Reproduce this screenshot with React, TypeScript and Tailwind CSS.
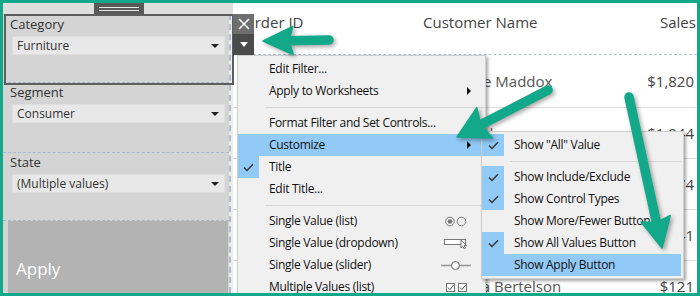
import React from "react";

const HL = "bg-[#91c9f7]";

function Check() {
  return (
    <svg width="11" height="9" viewBox="0 0 11 9">
      <polyline points="1,4.5 4,7.5 10,1.2" fill="none" stroke="#333" strokeWidth="1.4" />
    </svg>
  );
}

function RightTri() {
  return <div className="w-0 h-0 border-t-[4px] border-b-[4px] border-l-[4px] border-t-transparent border-b-transparent border-l-[#111]" />;
}

function Caret() {
  return <div className="w-0 h-0 border-l-[4px] border-r-[4px] border-t-[4px] border-l-transparent border-r-transparent border-t-[#222]" />;
}

function RadioIcon() {
  return (
    <svg width="22" height="11" viewBox="0 0 22 11">
      <circle cx="5" cy="5.5" r="4.3" fill="none" stroke="#777" strokeWidth="1" />
      <circle cx="5" cy="5.5" r="2.3" fill="#777" />
      <circle cx="16.5" cy="5.5" r="4.3" fill="none" stroke="#777" strokeWidth="1" />
    </svg>
  );
}

function DropIcon() {
  return (
    <svg width="25" height="12" viewBox="0 0 25 12">
      <rect x="0.5" y="2.5" width="21" height="5" fill="#fff" stroke="#777" strokeWidth="1" />
      <path d="M17 3 L17 11 L18.8 9.3 L20.3 11.8 L21.5 11.2 L20.1 8.6 L22.5 8.4 Z" fill="#fff" stroke="#666" strokeWidth="0.9" />
    </svg>
  );
}

function SliderIcon() {
  return (
    <svg width="30" height="11" viewBox="0 0 30 11">
      <line x1="0" y1="5.5" x2="30" y2="5.5" stroke="#999" strokeWidth="1.6" />
      <circle cx="14.5" cy="5.5" r="4" fill="#fff" stroke="#666" strokeWidth="1" />
    </svg>
  );
}

function ChecksIcon() {
  const box = (x: number) => (
    <g key={x}>
      <rect x={x + 0.5} y="1.5" width="8" height="8" fill="#fff" stroke="#777" strokeWidth="1" />
      <polyline points={`${x + 2},5.5 ${x + 4},7.5 ${x + 7.5},3`} fill="none" stroke="#555" strokeWidth="1" />
    </g>
  );
  return (
    <svg width="21" height="11" viewBox="0 0 21 11">
      {box(0)}
      {box(12)}
    </svg>
  );
}

type ItemProps = {
  label: string;
  checked?: boolean;
  highlight?: boolean;
  arrow?: boolean;
  icon?: React.ReactNode;
};

function MenuItem({ label, checked, highlight, arrow, icon }: ItemProps) {
  return (
    <div className={`flex h-[22px] items-center ${highlight ? HL : ""}`}>
      <div className={`w-[21px] h-full flex items-center justify-center ${checked ? HL : ""}`}>{checked && <Check />}</div>
      <div className="ml-[10px] flex-1 whitespace-nowrap">{label}</div>
      {arrow && (
        <div className="mr-[14px]">
          <RightTri />
        </div>
      )}
      {icon && <div className="mr-[14px] w-[30px] flex justify-center">{icon}</div>}
    </div>
  );
}

function SubItem({ label, checked, highlight }: ItemProps) {
  return (
    <div className={`flex h-[22px] items-center ${highlight ? HL : ""}`}>
      <div className={`w-[22px] h-full flex items-center justify-center ${checked ? HL : ""}`}>{checked && <Check />}</div>
      <div className="ml-[10px] flex-1 whitespace-nowrap">{label}</div>
    </div>
  );
}

function Sep({ indent }: { indent: string }) {
  return (
    <div className="h-[10px] flex items-center">
      <div className={`${indent} flex-1 h-px bg-[#d5d5d5]`} />
    </div>
  );
}

function Dropdown({ value }: { value: string }) {
  return (
    <div className="ml-[9px] mr-[4px] h-[19px] bg-[#e8e8e8] border border-[#dedede] flex items-center justify-between pl-[4px] pr-[5px] text-[12px] text-[#333] leading-none">
      <span>{value}</span>
      <Caret />
    </div>
  );
}

function FilterSection({ label, value, h }: { label: string; value: string; h: string }) {
  return (
    <div className={`${h} border-t border-dashed border-[#a9b7c9] pt-[1px]`}>
      <div className="pl-[7px] text-[13px] leading-[16px] text-[#333]">{label}</div>
      <div className="mt-[4px]">
        <Dropdown value={value} />
      </div>
    </div>
  );
}

function arrowParts(tail: [number, number], tip: [number, number], headLen: number, headHalf: number) {
  const dx = tip[0] - tail[0];
  const dy = tip[1] - tail[1];
  const L = Math.hypot(dx, dy);
  const ux = dx / L;
  const uy = dy / L;
  const px = -uy;
  const py = ux;
  const bx = tip[0] - ux * headLen;
  const by = tip[1] - uy * headLen;
  const head = `${tip[0]},${tip[1]} ${bx + px * headHalf},${by + py * headHalf} ${bx + ux * 4},${by + uy * 4} ${bx - px * headHalf},${by - py * headHalf}`;
  return { x1: tail[0], y1: tail[1], x2: bx + ux * 6, y2: by + uy * 6, head };
}

function Arrow({ tail, tip, len, half }: { tail: [number, number]; tip: [number, number]; len: number; half: number }) {
  const a = arrowParts(tail, tip, len, half);
  return (
    <g>
      <line x1={a.x1} y1={a.y1} x2={a.x2} y2={a.y2} stroke="#12a88a" strokeWidth="9.5" strokeLinecap="round" />
      <polygon points={a.head} fill="#12a88a" stroke="#12a88a" strokeWidth="1.5" strokeLinejoin="round" />
    </g>
  );
}

const rows = [
  { name: "Josephine Maddox", sales: "$1,820", h: "h-[53px]" },
  { name: "Rick Bensley", sales: "$1,044", h: "h-[51px]" },
  { name: "Joel Eaton", sales: "$2,574", h: "h-[51px]" },
  { name: "Dan Reichenbach", sales: "$1,041", h: "h-[51px]" },
  { name: "Anastasia Bertelson", sales: "$121", h: "h-[51px]" },
];

export default function App() {
  return (
    <div className="relative w-[700px] h-[296px] p-[3px] overflow-hidden bg-white font-['Open_Sans','Noto_Sans',sans-serif]">
      <div className="flex h-full">
        {/* Left filter panel */}
        <div className="w-[226px] shrink-0 flex flex-col bg-[#d4d4d4]">
          <div className="h-[11px] bg-[#dfdfdf] flex">
            <div className="ml-[91px] w-[50px] h-full bg-[#595959] flex flex-col items-center justify-center gap-[2px]">
              <div className="w-[40px] h-px bg-[#e8e8e8]" />
              <div className="w-[40px] h-px bg-[#e8e8e8]" />
            </div>
          </div>
          <FilterSection label="Category" value="Furniture" h="h-[68px]" />
          <FilterSection label="Segment" value="Consumer" h="h-[70px]" />
          <FilterSection label="State" value="(Multiple values)" h="h-[68px]" />
          <div className="flex-1 border-t border-dashed border-[#a9b7c9] pl-[5px] pr-[1px]">
            <div className="h-full bg-[#b3b3b3] pl-[8px] pt-[37px] text-[17px] leading-[22px] text-white">Apply</div>
          </div>
        </div>
        {/* divider */}
        <div className="w-[4px] shrink-0 flex flex-col">
          <div className="h-[11px] bg-[#dfdfdf]" />
          <div className="flex-1 bg-[#ececec] border-l-2 border-dashed border-[#b3bccb]" />
        </div>
        {/* Main table */}
        <div className="flex-1 min-w-0 overflow-hidden bg-white text-[15px]">
          <div className="h-[52px] grid grid-cols-[190px_237px_minmax(0,1fr)] pt-[9px] border-b border-dashed border-[#b6c1d0] text-[#444] leading-[20px]">
            <div className="pl-[10px]">Order ID</div>
            <div className="whitespace-nowrap">Customer Name</div>
            <div className="whitespace-nowrap">Sales</div>
          </div>
          {rows.map((r) => (
            <div key={r.name} className={`${r.h} grid grid-cols-[190px_237px_minmax(0,1fr)] items-center border-b border-[#dcdcdc] text-[#555]`}>
              <div />
              <div className="whitespace-nowrap">{r.name}</div>
              <div className="flex justify-end whitespace-nowrap pr-[3px] text-[#444]">
                <span>{r.sales}</span>
              </div>
            </div>
          ))}
        </div>
      </div>

      {/* selection outline */}
      <div className="absolute left-[4px] top-[14px] w-[230px] h-[71px] border-2 border-[#5e5e5e]" />

      {/* close / dropdown buttons */}
      <div className="absolute left-[233px] top-[14px] w-[21px] flex flex-col">
        <div className="h-[20px] bg-[#6e6e6e] flex items-center justify-center">
          <svg width="12" height="12" viewBox="0 0 12 12">
            <path d="M1 1 L11 11 M11 1 L1 11" stroke="#fff" strokeWidth="1.6" />
          </svg>
        </div>
        <div className="h-[21px] bg-[#4b4b4b] flex items-center justify-center">
          <div className="w-0 h-0 border-l-[4px] border-r-[4px] border-t-[5px] border-l-transparent border-r-transparent border-t-white" />
        </div>
      </div>

      {/* context menu */}
      <div className="absolute left-[237px] top-[55px] w-[249px] h-[245px] bg-[#f0f0f0] border border-[#cfcfcf] shadow-[2px_2px_3px_rgba(0,0,0,0.35)] pt-[2px] text-[12px] tracking-[-0.3px] text-[#111]">
        <MenuItem label="Edit Filter..." />
        <MenuItem label="Apply to Worksheets" arrow />
        <Sep indent="ml-[27px]" />
        <MenuItem label="Format Filter and Set Controls..." />
        <MenuItem label="Customize" highlight arrow />
        <MenuItem label="Title" checked />
        <MenuItem label="Edit Title..." />
        <Sep indent="ml-[27px]" />
        <MenuItem label="Single Value (list)" icon={<RadioIcon />} />
        <MenuItem label="Single Value (dropdown)" icon={<DropIcon />} />
        <MenuItem label="Single Value (slider)" icon={<SliderIcon />} />
        <MenuItem label="Multiple Values (list)" icon={<ChecksIcon />} />
      </div>

      {/* submenu */}
      <div className="absolute left-[481px] top-[131px] w-[203px] bg-[#f0f0f0] border border-[#cfcfcf] shadow-[2px_2px_3px_rgba(0,0,0,0.35)] py-[2px] pr-[2px] text-[12px] tracking-[-0.3px] text-[#111]">
        <SubItem label={'Show "All" Value'} checked />
        <Sep indent="ml-[28px]" />
        <SubItem label="Show Include/Exclude" checked />
        <SubItem label="Show Control Types" checked />
        <SubItem label="Show More/Fewer Button" />
        <SubItem label="Show All Values Button" checked />
        <SubItem label="Show Apply Button" highlight />
      </div>

      {/* arrows */}
      <svg className="absolute left-0 top-0 pointer-events-none" width="700" height="296" viewBox="0 0 700 296" style={{ filter: "drop-shadow(2px 2px 2px rgba(0,0,0,0.35))" }}>
        <Arrow tail={[329, 40]} tip={[263, 41]} len={30} half={14} />
        <Arrow tail={[548, 90]} tip={[457, 137]} len={31} half={17} />
        <Arrow tail={[629, 97]} tip={[662, 248]} len={30} half={15} />
      </svg>

      {/* teal frame */}
      <div className="absolute inset-0 border-[3px] border-[#12a88a] pointer-events-none" />
    </div>
  );
}
